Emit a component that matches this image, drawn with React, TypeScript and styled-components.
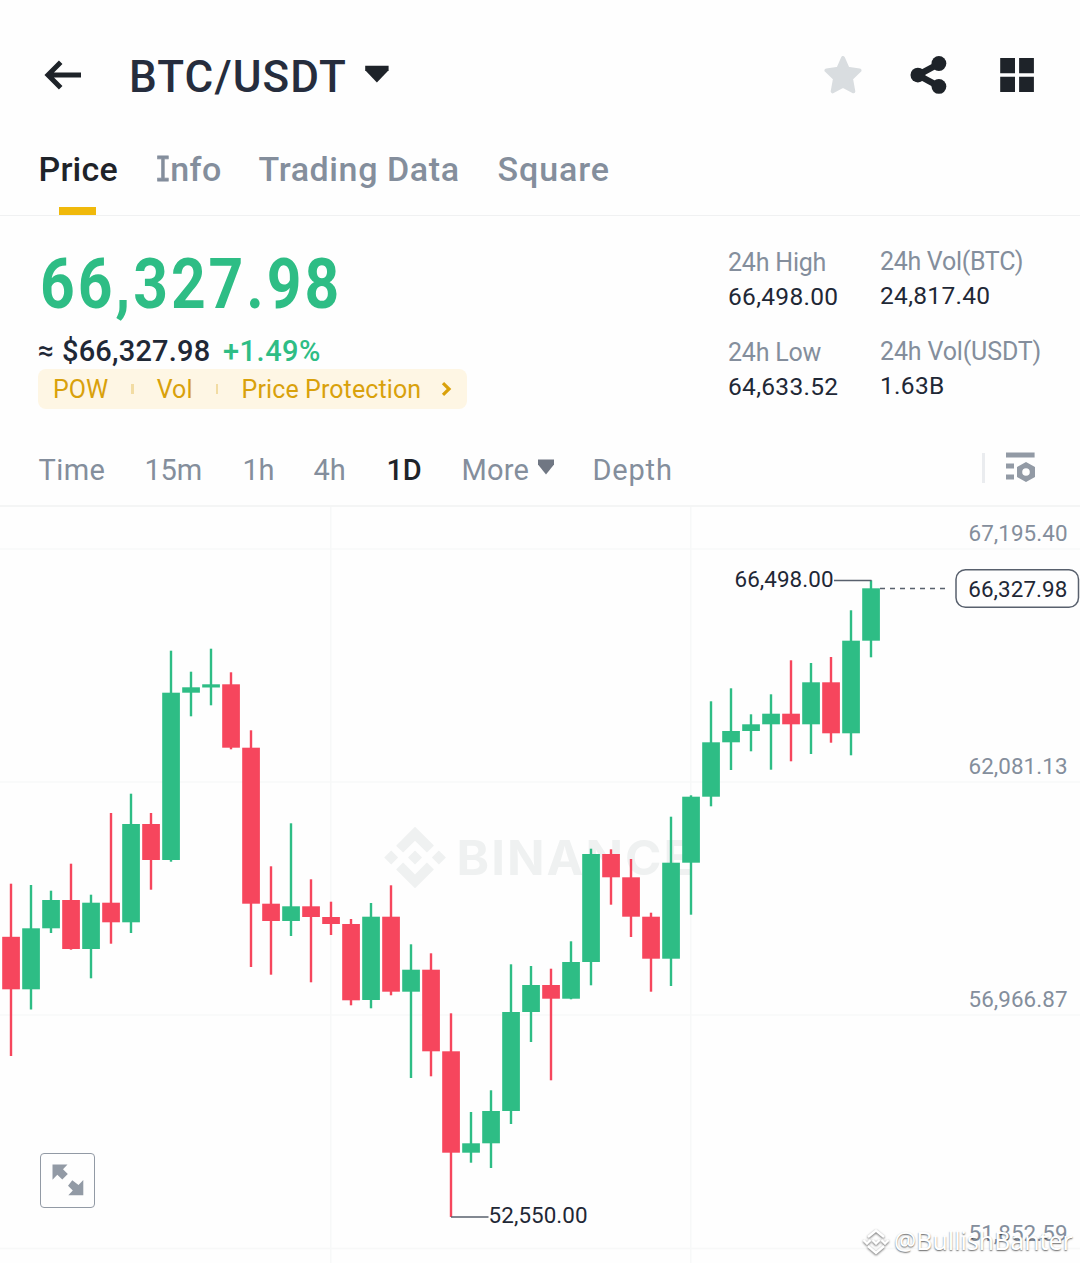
import React from "react";
import styled, { createGlobalStyle } from "styled-components";

const GREEN = "#2ebd85";
const RED = "#f6465d";
const INK = "#1e2329";
const NAVY = "#1f2836";
const MUTED = "#848e9c";

const GlobalStyle = createGlobalStyle`
  * { box-sizing: border-box; }
  body {
    margin: 0;
    background: #fefefe;
    font-family: Roboto, "Liberation Sans", sans-serif;
    color: ${NAVY};
  }
`;

const Screen = styled.main`
  width: 1080px;
  height: 1263px;
  overflow: hidden;
  display: flex;
  flex-direction: column;
`;

const Header = styled.header`
  height: 130px;
  padding: 20px 45px 0 44px;
  display: flex;
  align-items: center;
  flex: none;
`;

const Pair = styled.h1`
  margin: 4px 0 0 47px;
  width: 236px;
  font-size: 44px;
  line-height: 52px;
  font-weight: 500;
  letter-spacing: 1.1px;
  white-space: nowrap;
  color: #262d3d;
`;

const HeaderActions = styled.div`
  margin-left: auto;
  display: flex;
  align-items: center;
  gap: 48px;
`;

const Icon = styled.svg`
  display: block;
  flex: none;
`;

const Tabs = styled.nav`
  height: 85.5px;
  flex: none;
  padding: 19px 38px 0 38.5px;
  display: grid;
  grid-template-columns: 116px 104px 239px auto;
  justify-content: start;
  border-bottom: 1.5px solid #f0f1f2;
`;

const Tab = styled.a<{ $active?: boolean; $spacing: number }>`
  display: flex;
  flex-direction: column;
  justify-content: space-between;
  font-size: 34px;
  line-height: 40px;
  font-weight: 500;
  white-space: nowrap;
  letter-spacing: ${(p) => p.$spacing}px;
  color: ${(p) => (p.$active ? INK : MUTED)};
`;

const SlabLetter = styled.span`
  display: inline-block;
  margin: 0 -2.5px 0 -2px;
  font-family: "DejaVu Sans Mono", monospace;
  font-size: 33px;
  line-height: 1;
  font-weight: 400;
  transform: scaleX(0.8);
  -webkit-text-stroke: 0.8px currentColor;
`;

const TabMarker = styled.i`
  width: 37px;
  height: 7.5px;
  margin-left: 20.5px;
  background: #f0b90b;
`;

const Summary = styled.section`
  height: 219px;
  flex: none;
  padding: 26px 38px 0;
  display: flex;
  justify-content: space-between;
`;

const PriceColumn = styled.div`
  display: flex;
  flex-direction: column;
  align-items: flex-start;
`;

const LastPrice = styled.div`
  font-size: 70px;
  line-height: 84px;
  font-weight: 700;
  color: ${GREEN};
  letter-spacing: 3.4px;
  transform: scaleX(0.865);
  transform-origin: 0 50%;
  margin: 0 0 4.5px 1.5px;
`;

const FiatRow = styled.div`
  display: flex;
  height: 39px;
  font-size: 29px;
  line-height: 42px;
  font-weight: 500;
  white-space: nowrap;
`;

const Approx = styled.span`
  width: 24px;
  font-size: 28px;
`;

const Fiat = styled.span`
  width: 161px;
  letter-spacing: 0.2px;
`;

const Change = styled.span`
  color: ${GREEN};
  letter-spacing: 0.5px;
`;

const TagPill = styled.div`
  width: 429px;
  height: 40px;
  padding: 0 14px 0 15px;
  border-radius: 8px;
  background: #fef6e4;
  color: #d9a10b;
  display: flex;
  align-items: center;
  font-size: 25px;
  line-height: 40px;
`;

const Tag = styled.span<{ $width: number; $spacing?: number }>`
  width: ${(p) => p.$width}px;
  padding-top: 2px;
  letter-spacing: ${(p) => p.$spacing ?? 0}px;
  white-space: nowrap;
`;

const TagDivider = styled.i<{ $after: number }>`
  width: 2.5px;
  height: 10px;
  margin-right: ${(p) => p.$after}px;
  background: #f2dca3;
`;

const Stats = styled.dl`
  margin: 3px 0 0;
  display: grid;
  grid-template-columns: 152px 162px;
`;

const StatColumn = styled.div<{ $raise?: boolean }>`
  display: flex;
  flex-direction: column;
  gap: 20px;
  margin-top: ${(p) => (p.$raise ? -1 : 0)}px;
`;

const StatLabel = styled.dt<{ $spacing?: number }>`
  font-size: 25px;
  line-height: 36px;
  height: 35px;
  color: ${MUTED};
  white-space: nowrap;
  letter-spacing: ${(p) => p.$spacing ?? 0}px;
`;

const StatValue = styled.dd`
  margin: 0;
  font-size: 24.5px;
  line-height: 33px;
  height: 35px;
  letter-spacing: 0.3px;
`;

const IntervalBar = styled.nav`
  height: 72.5px;
  flex: none;
  padding: 0 45.5px 0 38.5px;
  border-bottom: 2.5px solid #f4f5f5;
  display: flex;
  align-items: center;
`;

const Interval = styled.a<{ $width: number; $active?: boolean; $spacing?: number }>`
  width: ${(p) => p.$width}px;
  display: flex;
  align-items: center;
  gap: 8.5px;
  font-size: 29px;
  line-height: 40px;
  white-space: nowrap;
  letter-spacing: ${(p) => p.$spacing ?? 0}px;
  font-weight: ${(p) => (p.$active ? 500 : 400)};
  color: ${(p) => (p.$active ? INK : MUTED)};
`;

const BarDivider = styled.i`
  width: 2.5px;
  height: 30px;
  margin: -4px 21px 0 auto;
  background: #eaecef;
`;

const IntervalTools = styled.span`
  margin-top: -5px;
`;

const ChartArea = styled.section`
  position: relative;
  height: 756px;
  flex: none;
`;

const ChartText = styled.text<{ $muted?: boolean }>`
  font: 400 22.4px Roboto, "Liberation Sans", sans-serif;
  fill: ${(p) => (p.$muted ? MUTED : NAVY)};
`;

const Wordmark = styled.text`
  font: 700 48px Inter, "Liberation Sans", sans-serif;
  letter-spacing: 2px;
  fill: #eff1f1;
`;

const ExpandButton = styled.button`
  position: absolute;
  left: 40px;
  top: 645.5px;
  width: 55px;
  height: 55px;
  padding: 0;
  border: 1.5px solid #929aa5;
  border-radius: 4px;
  background: #fefefe;
  display: flex;
  align-items: center;
  justify-content: center;
`;

const Signature = styled.div`
  position: absolute;
  left: 862px;
  top: 716px;
  display: flex;
  align-items: center;
  gap: 4px;
  color: #fff;
  font: 400 24.8px/34px "Noto Sans", sans-serif;
  text-shadow: 0 1px 1.5px rgba(0, 0, 0, 0.6);
`;

const SignatureMark = styled(Icon)`
  margin-top: 4px;
  filter: drop-shadow(0 1px 0.8px rgba(0, 0, 0, 0.6));
`;

/* [rising, body top, body bottom, high, low] */
type Candle = [number, number, number, number, number];
const candles: Candle[] = [
  [0, 936.8, 989.3, 883.7, 1056],
  [1, 928.3, 989.3, 885, 1009.5],
  [1, 900, 928.3, 890.7, 933],
  [0, 900, 949, 863.7, 949.7],
  [1, 902.7, 949, 894.7, 978.3],
  [0, 902.7, 922.3, 813, 943.7],
  [1, 824, 922.3, 793.7, 933],
  [0, 824, 860, 813, 889.7],
  [1, 692.7, 860, 650.7, 861.7],
  [1, 687.3, 692.7, 671.7, 716.3],
  [1, 684.3, 687.5, 648.7, 705.3],
  [0, 684.3, 747.7, 672.3, 749.3],
  [0, 747.7, 903.7, 730.3, 967],
  [0, 903.7, 921, 866.3, 974.7],
  [1, 906.3, 921, 823.3, 936],
  [0, 906.3, 917, 879.3, 982.3],
  [0, 917, 924, 901.7, 935],
  [0, 924, 1000.3, 919, 1005.3],
  [1, 916.7, 1000, 903, 1008.3],
  [0, 916.7, 991.7, 885.3, 995.3],
  [1, 969.7, 991.7, 944.3, 1078],
  [0, 969.7, 1051.3, 953.3, 1076.3],
  [0, 1051.3, 1152.7, 1013.3, 1217],
  [1, 1143.3, 1152.7, 1112, 1162.7],
  [1, 1111, 1143.3, 1090.3, 1168],
  [1, 1012, 1111, 964.3, 1124],
  [1, 985, 1012, 966, 1042],
  [0, 985, 998.7, 968.7, 1080.3],
  [1, 962, 998.7, 941.3, 999.3],
  [1, 854, 962, 848.7, 985.3],
  [0, 854, 877.3, 849.3, 904.7],
  [0, 877.3, 916.7, 859, 937],
  [0, 916.7, 958.7, 912.7, 991.7],
  [1, 862.7, 958.7, 816.7, 986],
  [1, 796.7, 862.7, 795.3, 914.7],
  [1, 742.3, 796.7, 701.3, 806.3],
  [1, 731, 742.3, 688.3, 770],
  [1, 724.3, 731, 714.3, 751.3],
  [1, 713.7, 724.3, 694.3, 769.7],
  [0, 713.7, 724.3, 660.3, 761.3],
  [1, 682.3, 724.3, 663, 754],
  [0, 682.3, 733.3, 657, 742.7],
  [1, 640.7, 733.3, 610.3, 755.3],
  [1, 588.3, 640.7, 580.3, 657.3],
];

const axis = [
  { label: "67,195.40", line: 549, base: 541.4 },
  { label: "62,081.13", line: 782, base: 774.4 },
  { label: "56,966.87", line: 1015, base: 1007.4 },
  { label: "51,852.59", line: 1248.5, base: 1241.4 },
];

const BINANCE_MARK =
  "M16.624 13.9202l2.7175 2.7154-7.353 7.353-7.353-7.352 2.7175-2.7164 4.6355 4.6595 4.6356-4.6595zm4.6366-4.6366L24 12l-2.7154 2.7164L18.5682 12l2.6924-2.7164zm-9.272.001l2.7163 2.6914-2.7164 2.7174v-.001L9.2721 12l2.7164-2.7154zm-9.2722-.001L5.4088 12l-2.6914 2.6924L0 12l2.7164-2.7164zM11.9885.0115l7.353 7.329-2.7174 2.7154-4.6356-4.6356-4.6355 4.6595-2.7174-2.7154 7.353-7.353z";

function Chart() {
  return (
    <Icon width="1080" height="756" viewBox="0 507 1080 756">
      <g stroke="#f7f8f8" strokeWidth="1.6">
        {axis.map((a) => (
          <line key={a.label} x1="0" x2="1080" y1={a.line} y2={a.line} />
        ))}
        <line x1="330.8" x2="330.8" y1="507" y2="1263" />
        <line x1="690.8" x2="690.8" y1="507" y2="1263" />
      </g>
      <path d={BINANCE_MARK} fill="#eff1f1" transform="translate(384.2 826.7) scale(2.57)" />
      <Wordmark x="456.5" y="875" textLength="239" lengthAdjust="spacingAndGlyphs">
        BINANCE
      </Wordmark>
      {candles.map(([up, top, bottom, high, low], i) => {
        const cx = 11 + i * 20;
        return (
          <g key={i} fill={up ? GREEN : RED}>
            <rect x={cx - 1.2} y={high} width="2.4" height={low - high} />
            <rect x={cx - 8.8} y={top} width="17.7" height={bottom - top} />
          </g>
        );
      })}
      <g stroke="#58606d" strokeWidth="1.5" fill="none">
        <path d="M834 580.5H871.5" />
        <path d="M451 1217H488.5" />
        <path d="M880 588.4H945" strokeDasharray="5 5" />
        <rect x="956" y="569.8" width="122.5" height="37.5" rx="9.5" />
      </g>
      <ChartText x="734.5" y="586.6" textLength="99">66,498.00</ChartText>
      <ChartText x="488.6" y="1223.4" textLength="99">52,550.00</ChartText>
      <ChartText x="968.3" y="597.4" textLength="99">66,327.98</ChartText>
      {axis.map((a) => (
        <ChartText key={a.label} $muted x="968.5" y={a.base} textLength="99">
          {a.label}
        </ChartText>
      ))}
    </Icon>
  );
}

export default function App() {
  return (
    <Screen>
      <GlobalStyle />
      <Header>
        <Icon width="38" height="32" viewBox="44 59 38 32" fill="none" stroke={INK} strokeWidth="5">
          <path d="M81 75H49M60.7 62.3L48 75L60.7 87.7" strokeLinejoin="miter" />
        </Icon>
        <Pair>BTC/USDT</Pair>
        <Icon width="24" height="20" viewBox="365.5 65.5 24 20" fill={INK}>
          <path d="M365.7 66.2h23.4v4.6L377.4 83.1 365.7 70.8z" />
        </Icon>
        <HeaderActions>
          <Icon width="38" height="39" viewBox="823.5 55.5 38 39" fill="#d9dde0" stroke="#d9dde0">
            <path
              strokeWidth="4"
              strokeLinejoin="round"
              d="M842.5 57.5L847.2 68.2L859 69.9L850.5 78L852.8 90.8L842.5 85.3L832.2 90.8L834.5 78L826 69.9L837.8 68.2Z"
            />
          </Icon>
          <Icon width="38" height="39" viewBox="909.5 55.5 38 39" fill={INK}>
            <path d="M938.4 63.2L917.4 74.6L938.4 85.9" fill="none" stroke={INK} strokeWidth="6.4" />
            <circle cx="917.4" cy="74.6" r="7.4" />
            <circle cx="938.4" cy="63" r="7.4" />
            <circle cx="938.4" cy="85.9" r="7.4" />
          </Icon>
          <Icon width="39" height="39" viewBox="996 55.5 39 39" fill={INK}>
            <path d="M1000.2 57.5h14.8v15.2h-14.8zM1019.1 57.5h14.8v15.2h-14.8zM1000.2 76.3h14.8v15.2h-14.8zM1019.1 76.3h14.8v15.2h-14.8z" />
          </Icon>
        </HeaderActions>
      </Header>

      <Tabs>
        <Tab $active $spacing={0.2}>
          Price
          <TabMarker />
        </Tab>
        <Tab $spacing={0.4}>
          <span>
            <SlabLetter>I</SlabLetter>nfo
          </span>
        </Tab>
        <Tab $spacing={0.6}>Trading Data</Tab>
        <Tab $spacing={0.9}>Square</Tab>
      </Tabs>

      <Summary>
        <PriceColumn>
          <LastPrice>66,327.98</LastPrice>
          <FiatRow>
            <Approx>≈</Approx>
            <Fiat>$66,327.98</Fiat>
            <Change>+1.49%</Change>
          </FiatRow>
          <TagPill>
            <Tag $width={78.5}>POW</Tag>
            <TagDivider $after={23} />
            <Tag $width={59}>Vol</Tag>
            <TagDivider $after={23.5} />
            <Tag $width={200} $spacing={0.1}>Price Protection</Tag>
            <Icon width="12" height="16" viewBox="0 0 12 16" fill="none" stroke="#d9a10b" strokeWidth="3.2">
              <path d="M2 2.2L8 8L2 13.8" />
            </Icon>
          </TagPill>
        </PriceColumn>
        <Stats>
          <StatColumn>
            <div>
              <StatLabel $spacing={-0.2}>24h High</StatLabel>
              <StatValue>66,498.00</StatValue>
            </div>
            <div>
              <StatLabel $spacing={-0.2}>24h Low</StatLabel>
              <StatValue>64,633.52</StatValue>
            </div>
          </StatColumn>
          <StatColumn $raise>
            <div>
              <StatLabel $spacing={-0.3}>24h Vol(BTC)</StatLabel>
              <StatValue>24,817.40</StatValue>
            </div>
            <div>
              <StatLabel $spacing={-0.15}>24h Vol(USDT)</StatLabel>
              <StatValue>1.63B</StatValue>
            </div>
          </StatColumn>
        </Stats>
      </Summary>

      <IntervalBar>
        <Interval $width={106} $spacing={0.4}>Time</Interval>
        <Interval $width={98} $spacing={-0.2}>15m</Interval>
        <Interval $width={71} $spacing={-0.4}>1h</Interval>
        <Interval $width={73}>4h</Interval>
        <Interval $width={75} $active $spacing={-0.3}>1D</Interval>
        <Interval $width={131} $spacing={0.2}>
          More
          <Icon width="16" height="22" viewBox="0 0 16 22" fill="#707783">
            <path d="M0 0.5h16v5L8 15.5 0 5.5z" />
          </Icon>
        </Interval>
        <Interval $width={90} $spacing={0.8}>Depth</Interval>
        <BarDivider />
        <IntervalTools>
          <Icon width="29" height="30" viewBox="0 0 29 30" fill="#929aa5">
            <path d="M0 0.5h28.6v5H0zM0 11.5h8v5H0zM0 22.5h8v5H0z" />
            <path fillRule="evenodd" d="M20 10l9 5v10l-9 5-9-5V15zM20 16.2a3.8 3.8 0 1 0 0 7.6a3.8 3.8 0 1 0 0-7.6z" />
          </Icon>
        </IntervalTools>
      </IntervalBar>

      <ChartArea>
        <Chart />
        <ExpandButton aria-label="Expand chart">
          <Icon width="32" height="32" viewBox="0 0 32 32" fill="#929aa5">
            <path d="M0.5 0.5H15.5L11 5.2L15.8 10L10.3 15.5L5.3 10.7L0.5 15.8z" />
            <path d="M31.3 31.3H16.3L20.8 26.6L16 21.8L20.3 16.3L26.5 21.1L31.3 16z" />
          </Icon>
        </ExpandButton>
        <Signature>
          <SignatureMark width="28" height="26" viewBox="0 0 28 26" fill="none" stroke="#fff" strokeWidth="2.4">
            <path d="M6 8L14 1.5L22 8M1.5 11L5 14.5L8.5 11M10.5 11L14 14.5L17.5 11M19.5 11L23 14.5L26.5 11M6 17L14 24L22 17" />
          </SignatureMark>
          <span>@BullishBanter</span>
        </Signature>
      </ChartArea>
    </Screen>
  );
}
